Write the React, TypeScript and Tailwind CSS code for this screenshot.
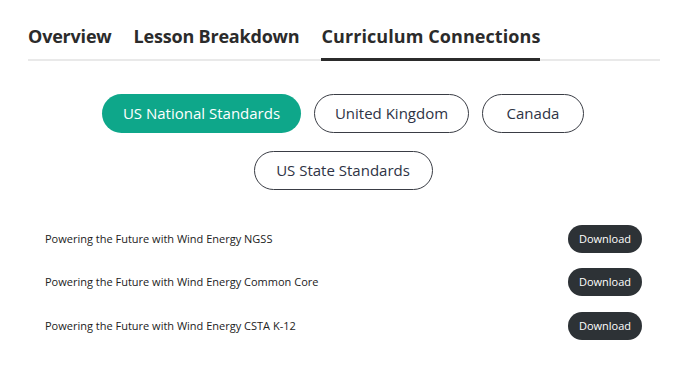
import React from "react";

const tabs = ["Overview", "Lesson Breakdown", "Curriculum Connections"];
const pills = [
  { label: "US National Standards", w: "w-[199px]", active: true },
  { label: "United Kingdom", w: "w-[155px]", active: false },
  { label: "Canada", w: "w-[102px]", active: false },
  { label: "US State Standards", w: "w-[179px]", active: false },
];
const rows = [
  "Powering the Future with Wind Energy NGSS",
  "Powering the Future with Wind Energy Common Core",
  "Powering the Future with Wind Energy CSTA K-12",
];

export default function App() {
  return (
    <div
      className="w-[690px] h-[387px] bg-white px-[28px] pt-[23px]"
      style={{ fontFamily: '"Open Sans", "Noto Sans", sans-serif' }}
    >
      <div className="flex gap-[22px] border-b-2 border-[#e9e9e9] w-[632px]">
        {tabs.map((t, i) => (
          <div
            key={t}
            className={
              i === 2
                ? "text-[18px] leading-[27px] font-bold text-[#2b2b2b] pb-[8px] border-b-[3px] border-[#2b2b2b] -mb-[2px] tracking-[0.08px]"
                : "text-[18px] leading-[27px] font-bold text-[#2b2b2b] pb-[8px] tracking-[-0.2px]"
            }
          >
            {t}
          </div>
        ))}
      </div>

      <div className="flex flex-wrap justify-center gap-x-[13px] gap-y-[18px] mt-[33px] pl-[58px] pr-[62px]">
        {pills.map((p) =>
          p.active ? (
            <div
              key={p.label}
              className={`${p.w} h-[39px] rounded-full bg-[#0ea78a] text-white text-[15px] flex items-center justify-center`}
            >
              {p.label}
            </div>
          ) : (
            <div
              key={p.label}
              className={`${p.w} h-[39px] rounded-full border border-[#3a3d45] text-[#2e3345] text-[15px] flex items-center justify-center`}
            >
              {p.label}
            </div>
          )
        )}
      </div>

      <div className="mt-[27px] flex flex-col">
        {rows.map((r) => (
          <div key={r} className="h-[43.5px] flex items-center justify-between pl-[17px] pr-[20px]">
            <span className="text-[11px] text-[#222222]">{r}</span>
            <button className="w-[74px] h-[28px] rounded-full bg-[#2d3236] text-white text-[11px] flex items-center justify-center">
              Download
            </button>
          </div>
        ))}
      </div>
    </div>
  );
}
